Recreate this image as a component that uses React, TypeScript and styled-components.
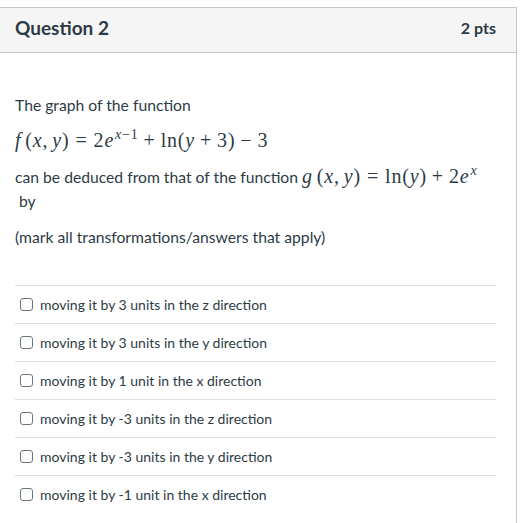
import styled, { createGlobalStyle } from 'styled-components';

const GlobalStyle = createGlobalStyle`
  body {
    margin: 0;
    background: #ffffff;
    font-family: Lato, "Noto Sans", sans-serif;
    color: #2d3b45;
  }
`;

const answers = [
  'moving it by 3 units in the z direction',
  'moving it by 3 units in the y direction',
  'moving it by 1 unit in the x direction',
  'moving it by -3 units in the z direction',
  'moving it by -3 units in the y direction',
  'moving it by -1 unit in the x direction',
];

export default function App() {
  return (
    <>
      <GlobalStyle />
      <Card>
        <Header>
          <Title>Question 2</Title>
          <Points>2 pts</Points>
        </Header>
        <Body>
          <Text>The graph of the function</Text>
          <Text>
            <MathSpan>
              <Var>f</Var>
              <Thin />(<Var>x</Var>,<Thin />
              <Var>y</Var>)<Rel>=</Rel>2<Var>e</Var>
              <Sup>
                <Var>x</Var>−1
              </Sup>
              <Bin>+</Bin>ln(<Var>y</Var>
              <Bin>+</Bin>3)<Bin>−</Bin>3
            </MathSpan>
          </Text>
          <Text>
            can be deduced from that of the function{' '}
            <MathSpan>
              <Var>g</Var>
              <Thin />(<Var>x</Var>,<Thin />
              <Var>y</Var>)<Rel>=</Rel>ln(<Var>y</Var>)<Bin>+</Bin>2<Var>e</Var>
              <Sup>
                <Var>x</Var>
              </Sup>
            </MathSpan>
            <br />
            {'\u00a0'}by
          </Text>
          <Text>(mark all transformations/answers that apply)</Text>
          <Answers>
            {answers.map((a) => (
              <Answer key={a}>
                <Box type="checkbox" />
                <AnswerText>{a}</AnswerText>
              </Answer>
            ))}
          </Answers>
        </Body>
      </Card>
    </>
  );
}

const Card = styled.div`
  margin: 7px 0 0 -1px;
  width: 518px;
  border: 1px solid #c3c7ca;
  border-bottom: none;
  min-height: 520px;
  box-sizing: border-box;
`;

const Header = styled.div`
  height: 45px;
  box-sizing: border-box;
  background: #f5f5f5;
  border-bottom: 1px solid #c3c7ca;
  display: flex;
  align-items: center;
  justify-content: space-between;
  padding: 0 20px 6px 15px;
`;

const Title = styled.div`
  font-size: 19px;
  font-weight: 700;
  color: #2d3b45;
`;

const Points = styled.div`
  font-size: 16px;
  font-weight: 700;
  color: #2d3b45;
`;

const Body = styled.div`
  padding: 40px 20px 0 15px;
`;

const Text = styled.p`
  margin: 0 0 12px;
  font-size: 15.7px;
  line-height: 24px;
`;

const MathSpan = styled.span`
  font-family: "Liberation Serif", "DejaVu Serif", serif;
  font-size: 20px;
  letter-spacing: 0.04em;
  line-height: 1;
  white-space: nowrap;
`;

const Var = styled.i`
  font-style: italic;
`;

const Thin = styled.span`
  display: inline-block;
  width: 0.2em;
`;

const Rel = styled.span`
  margin: 0 0.3em;
`;

const Bin = styled.span`
  margin: 0 0.25em;
`;

const Sup = styled.sup`
  font-size: 0.7em;
  vertical-align: 0.6em;
  line-height: 0;
  margin-left: 1px;
`;

const Answers = styled.div`
  margin-top: 36px;
`;

const Answer = styled.label`
  display: flex;
  align-items: center;
  height: 37px;
  border-top: 1px solid #dcdfe1;
  padding-left: 5px;
  gap: 7px;
`;

const Box = styled.input`
  appearance: none;
  margin: 0;
  width: 13px;
  height: 13px;
  border: 1px solid #6b7780;
  border-radius: 3px;
  background: #ffffff;
  box-sizing: border-box;
`;

const AnswerText = styled.span`
  font-size: 14px;
  color: #2d3b45;
`;
